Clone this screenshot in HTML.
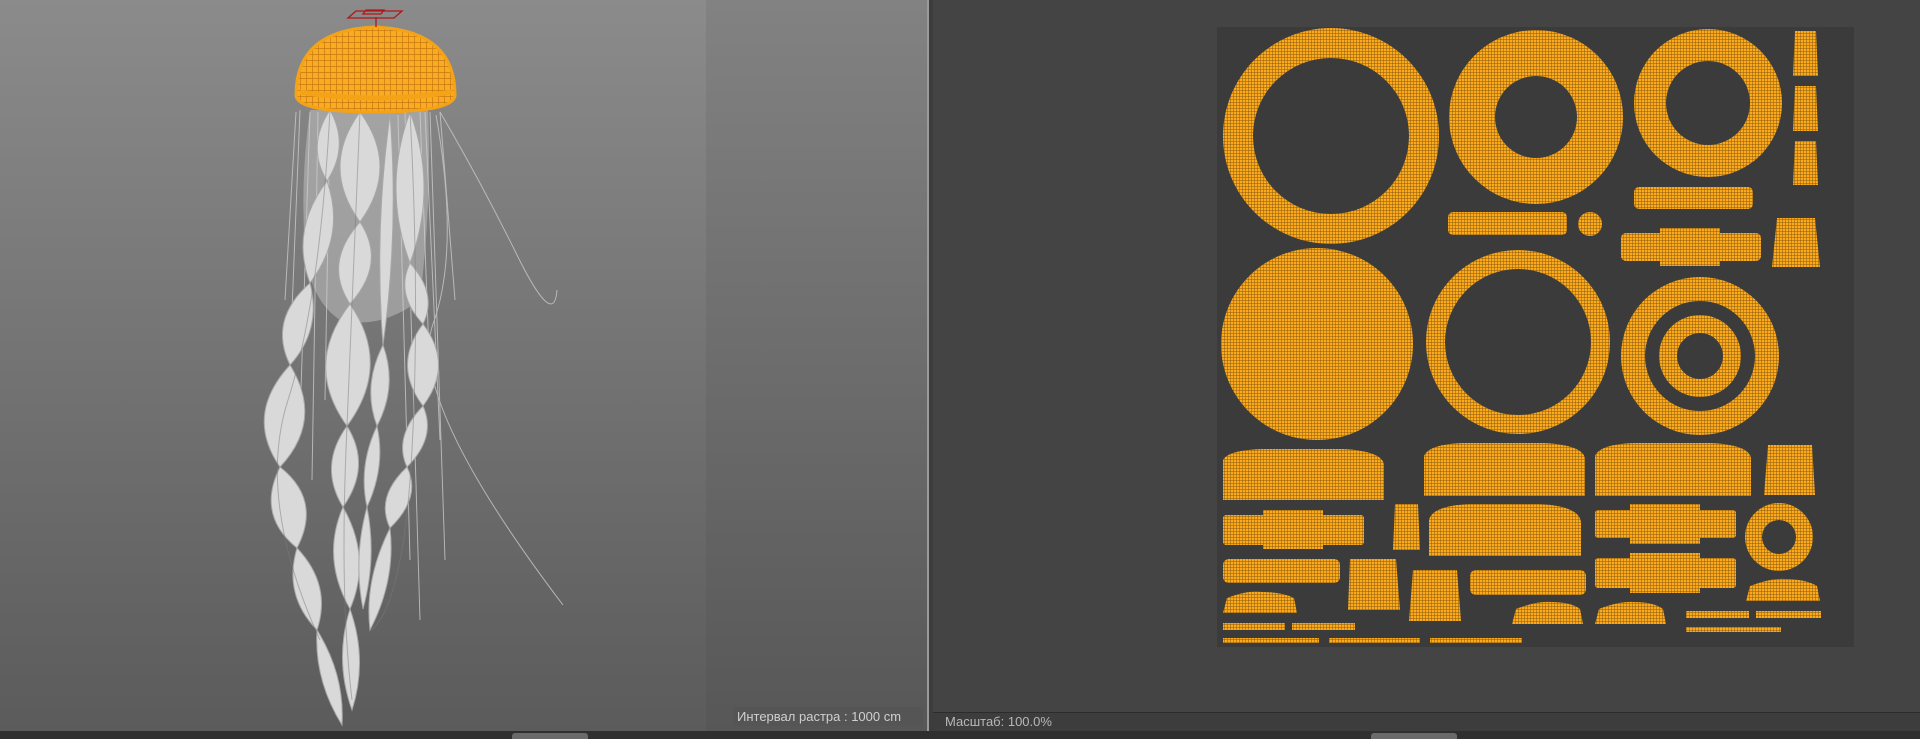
<!DOCTYPE html>
<html><head><meta charset="utf-8"><style>
*{margin:0;padding:0;box-sizing:border-box}
html,body{width:1920px;height:739px;overflow:hidden;background:#3a3a3a;font-family:"Liberation Sans","DejaVu Sans",sans-serif}
#lv{position:absolute;left:0;top:0;width:927px;height:731px;background:linear-gradient(#8b8b8b,#5b5b5b)}
#lv2{position:absolute;left:706px;top:0;width:221px;height:731px;background:linear-gradient(#828282,#575757)}
#div{position:absolute;left:927px;top:0;width:6px;height:731px;background:#3c3c3c;border-left:2px solid #9a9a9a}
#rv{position:absolute;left:933px;top:0;width:987px;height:712px;background:#444}
#rs{position:absolute;left:933px;top:712px;width:987px;height:19px;background:#3d3d3d;border-top:1px solid #2c2c2c;color:#b8b8b8;font-size:13px;line-height:18px;padding-left:12px}
#lab{position:absolute;left:733px;top:707px;width:190px;height:19px;background:#555;color:#d0d0d0;font-size:13px;line-height:19px;padding-left:4px}
#bot{position:absolute;left:0;top:731px;width:1920px;height:8px;background:#2f2f2f}
.tab{position:absolute;top:733px;height:6px;background:#6a6a6a;border-radius:3px 3px 0 0}
svg{position:absolute;left:0;top:0}
</style></head><body>
<div id="lv"></div><div id="lv2"></div>
<div id="div"></div>
<div id="rv"></div>
<div id="lab">Интервал растра : 1000 cm</div>
<div id="rs">Масштаб: 100.0%</div>
<div id="bot"></div>
<div class="tab" style="left:512px;width:76px"></div>
<div class="tab" style="left:1371px;width:86px"></div>
<svg width="1920" height="739" viewBox="0 0 1920 739">
<defs>
<pattern id="m" width="3" height="3" patternUnits="userSpaceOnUse">
<rect width="3" height="3" fill="#fca91a"/><path d="M0 .5H3M.5 0V3" stroke="#8a5a10" stroke-width=".5"/>
</pattern>
<pattern id="d" width="6" height="6" patternUnits="userSpaceOnUse">
<rect width="6" height="6" fill="#fbab22"/><path d="M0 .5H6M.5 0V6" stroke="#c77a10" stroke-width=".7"/>
</pattern>
</defs>
<rect x="1217" y="27" width="637" height="620" fill="#3b3b3b"/>
<g fill="url(#m)" fill-rule="evenodd">
<path d="M1223 136a108 108 0 1 0 216 0a108 108 0 1 0-216 0ZM1253 136a78 78 0 1 0 156 0a78 78 0 1 0-156 0Z"/>
<path d="M1449 117a87 87 0 1 0 174 0a87 87 0 1 0-174 0ZM1495 117a41 41 0 1 0 82 0a41 41 0 1 0-82 0Z"/>
<path d="M1634 103a74 74 0 1 0 148 0a74 74 0 1 0-148 0ZM1666 103a42 42 0 1 0 84 0a42 42 0 1 0-84 0Z"/>
<path d="M1795 31h21l2 45h-25ZM1795 86h21l2 45h-25ZM1795 141h21l2 44h-25Z"/>
<rect x="1634" y="187" width="119" height="22" rx="5"/>
<rect x="1448" y="212" width="119" height="23" rx="5"/>
<circle cx="1590" cy="224" r="12"/>
<rect x="1621" y="233" width="140" height="28" rx="5"/><rect x="1660" y="228" width="60" height="38"/>
<path d="M1777 218h38l5 49h-48Z"/>
<circle cx="1317" cy="344" r="96"/>
<path d="M1426 342a92 92 0 1 0 184 0a92 92 0 1 0-184 0ZM1445 342a73 73 0 1 0 146 0a73 73 0 1 0-146 0Z"/>
<path d="M1621 356a79 79 0 1 0 158 0a79 79 0 1 0-158 0ZM1645 356a55 55 0 1 0 110 0a55 55 0 1 0-110 0Z"/>
<path d="M1659 356a41 41 0 1 0 82 0a41 41 0 1 0-82 0ZM1677 356a23 23 0 1 0 46 0a23 23 0 1 0-46 0Z"/>
<path d="M1223 460q5-10 40-11h80q38 2 41 15v36h-161Z"/>
<path d="M1424 456q5-12 40-13h80q38 2 41 15v38h-161Z"/>
<path d="M1595 456q5-12 40-13h76q38 2 40 15v38h-156Z"/>
<path d="M1768 445h44l3 50h-51Z"/>
<rect x="1223" y="515" width="141" height="30" rx="3"/><rect x="1263" y="510" width="60" height="39"/>
<path d="M1395 504h23l2 46h-27Z"/>
<path d="M1429 520q3-14 40-16h70q40 2 42 18v34h-152Z"/>
<rect x="1595" y="510" width="141" height="28" rx="3"/><rect x="1630" y="504" width="70" height="40"/>
<path d="M1745 537a34 34 0 1 0 68 0a34 34 0 1 0-68 0ZM1762 537a17 17 0 1 0 34 0a17 17 0 1 0-34 0Z"/>
<rect x="1223" y="559" width="117" height="24" rx="6"/>
<path d="M1350 559h46l4 51h-52Z"/>
<path d="M1413 570h44l4 51h-52Z"/>
<rect x="1470" y="570" width="116" height="25" rx="6"/>
<rect x="1595" y="558" width="141" height="30" rx="3"/><rect x="1630" y="553" width="70" height="40"/>
<path d="M1746 601l4-15q20-8 35-7q20 0 32 7l3 15Z"/>
<path d="M1223 613l4-15q20-8 35-6q20 0 32 6l3 15Z"/>
<path d="M1512 624l4-15q20-8 35-7q20 0 29 7l3 15Z"/>
<path d="M1595 624l4-15q20-8 35-7q20 0 29 7l3 15Z"/>
<rect x="1223" y="623" width="62" height="7"/><rect x="1292" y="623" width="63" height="7"/>
<rect x="1686" y="611" width="63" height="7"/><rect x="1756" y="611" width="65" height="7"/>
<rect x="1686" y="627" width="95" height="5"/>
<rect x="1223" y="638" width="96" height="5"/><rect x="1329" y="638" width="91" height="5"/><rect x="1430" y="638" width="92" height="5"/>
</g>
<!-- jellyfish body mass -->
<path d="M310 110H428Q432 200 420 300Q380 330 340 320Q310 300 305 250Q300 180 310 110Z" fill="#bdbdbd" opacity=".55"/>
<g fill="none" stroke="#cfcfcf" stroke-width="1" opacity=".75">
<path d="M300 110L290 360M310 112L300 420M318 112L312 480M330 112L325 400M420 112L430 380M430 112L445 560M440 112L455 300M425 112L440 440M296 112L285 300"/>
<path d="M440 112Q480 180 517 255T557 290M436 115Q460 250 433 324T563 605M405 112L420 620M398 115L410 560"/>
</g>
<g fill="#d9d9d9" stroke="#a8a8a8" stroke-width="1">
<path d="M330 110Q350 146 327 181Q306 146 330 110Z"/>
<path d="M327 181Q346 235 310 283Q290 230 327 181Z"/>
<path d="M310 283Q322 330 290 365Q268 320 310 283Z"/>
<path d="M290 365Q324 420 280 467Q244 415 290 365Z"/>
<path d="M280 467Q322 500 297 548Q256 515 280 467Z"/>
<path d="M297 548Q332 585 317 630Q283 595 297 548Z"/>
<path d="M317 630Q345 675 342 725Q314 680 317 630Z"/>
<path d="M360 112Q400 167 360 222Q320 167 360 112Z"/>
<path d="M360 222Q387 263 350 304Q323 263 360 222Z"/>
<path d="M350 304Q392 365 347 426Q303 365 350 304Z"/>
<path d="M347 426Q372 466 343 507Q318 466 347 426Z"/>
<path d="M343 507Q372 558 350 609Q321 558 343 507Z"/>
<path d="M350 609Q368 660 352 710Q334 660 350 609Z"/>
<path d="M410 112Q438 188 410 263Q382 188 410 112Z"/>
<path d="M410 263Q438 294 423 324Q395 294 410 263Z"/>
<path d="M423 324Q454 365 423 406Q392 365 423 324Z"/>
<path d="M423 406Q437 437 407 467Q393 437 423 406Z"/>
<path d="M407 467Q422 497 390 528Q375 497 407 467Z"/>
<path d="M390 528Q396 580 370 630Q364 580 390 528Z"/>
<path d="M390 115Q399 230 383 345Q374 230 390 115Z"/>
<path d="M383 345Q398 386 377 426Q362 386 383 345Z"/>
<path d="M377 426Q386 466 367 507Q358 466 377 426Z"/>
<path d="M367 507Q377 558 363 609Q353 558 367 507Z"/>
</g>
<g fill="none" stroke="#7c7c7c" stroke-width="1" opacity=".5">
<path d="M330 110Q320 300 288 400T320 640M360 112Q352 300 346 450T352 700M410 112Q420 300 412 450T372 630"/>
</g>
<path d="M296 95Q296 30 375 27Q455 30 455 95Q455 112 375 112Q296 112 296 95Z" fill="url(#d)" stroke="#f5a316" stroke-width="3"/>
<path d="M300 92Q375 104 452 92" stroke="#f5a316" stroke-width="5" fill="none"/>
<g stroke="#b01818" stroke-width="1.3" fill="none">
<path d="M376 27V17M348 18l8-7h46l-8 7ZM366 10h18l-3 4h-18Z"/>
</g>
</svg>
</body></html>
